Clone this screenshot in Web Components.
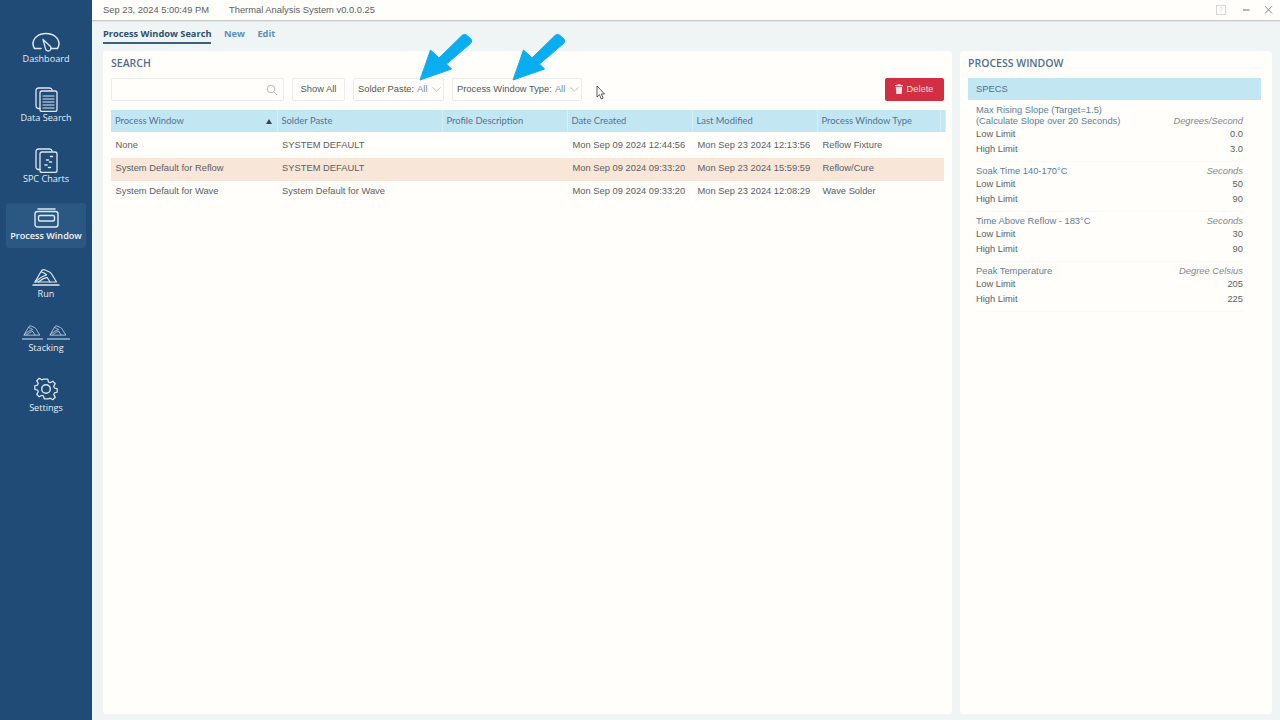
<!DOCTYPE html>
<html><head><meta charset="utf-8"><title>Thermal Analysis System</title>
<style>
html,body{margin:0;height:100%;overflow:hidden}
body{width:1280px;height:720px;font-family:"Liberation Sans",Arial,sans-serif;background:#eff5f4;position:relative}
app-shell{display:flex;width:1280px;height:720px}
</style></head><body>
<app-shell>
  <side-bar slot="side">
    <nav-item label="Dashboard" icon="dash" top="32" ih="21" gap="0"></nav-item>
    <nav-item label="Data Search" icon="data" top="22" ih="25" gap="0"></nav-item>
    <nav-item label="SPC Charts" icon="spc" top="24" ih="25" gap="0"></nav-item>
    <nav-item label="Process Window" icon="pw" top="18" ih="20" gap="2" active></nav-item>
    <nav-item label="Run" icon="run" top="19" ih="19" gap="2"></nav-item>
    <nav-item label="Stacking" icon="stack" top="23" ih="18" gap="1"></nav-item>
    <nav-item label="Settings" icon="gear" top="23" ih="24" gap="1"></nav-item>
  </side-bar>
  <main-area>
    <title-bar></title-bar>
    <tab-bar></tab-bar>
    <div style="display:flex;gap:8px;padding:1px 8px 6px 11px;flex:1;min-height:0">
      <search-panel></search-panel>
      <spec-panel>
        <spec-group name="Max Rising Slope (Target=1.5)&#10;(Calculate Slope over 20 Seconds)" unit="Degrees/Second" low="0.0" high="3.0"></spec-group>
        <spec-group name="Soak Time 140-170°C" unit="Seconds" low="50" high="90"></spec-group>
        <spec-group name="Time Above Reflow - 183°C" unit="Seconds" low="30" high="90"></spec-group>
        <spec-group name="Peak Temperature" unit="Degree Celsius" low="205" high="225"></spec-group>
      </spec-panel>
    </div>
  </main-area>
</app-shell>
<call-arrow style="left:418px;top:32px"></call-arrow>
<call-arrow style="left:511px;top:32px"></call-arrow>
<mouse-cursor style="left:596px;top:85px"></mouse-cursor>
<script>
function def(name, css, html, init){
  customElements.define(name, class extends HTMLElement{
    connectedCallback(){
      if(this.shadowRoot) return;
      const r=this.attachShadow({mode:'open'});
      const h=typeof html==='function'?html(this):html;
      r.innerHTML='<style>'+css+'</style>'+h;
      if(init) init(this,r);
    }
  });
}
def('app-shell',':host{display:flex;width:1280px;height:720px}','<slot name="side"></slot><slot></slot>');
def('side-bar',':host{display:flex;flex-direction:column;width:92px;height:720px;background:#1f4b76;box-sizing:border-box;align-items:center;flex:none;position:relative}','<slot></slot>');
const hull='<path d="M3 15 9 4.500c.8-1.500 2-2.300 3.500-1.800l5 2.300c2 .8 2.500 2.800 3.500 4.300l3.500 5.700z"/><path d="M3 15c4-3.800 7-5.600 11-7M6.500 15c3-2.800 5.500-4.200 8.500-4.700l3 4.700M9.500 5c2 .5 3.500 1.400 5 2.800"/>';
const I={
 dash:'<svg width="30" height="21" viewBox="0 0 30 21" fill="none" stroke="#dfe9f1" stroke-width="1.5" stroke-linecap="round" stroke-linejoin="round"><path d="M10 16.500H3.500C2.500 15 2 13.500 2 12 2 6 7.500 1.500 15 1.500S28 6 28 12c0 1.500-.5 3-1.500 4.500H20"/><path d="M12 7.500l7.500 7a2.800 2.800 0 1 1-5 2.200z" stroke-width="1.300"/></svg>',
 data:'<svg width="25" height="25" viewBox="0 0 25 25" fill="none" stroke="#dfe9f1" stroke-width="1.3" stroke-linecap="round" stroke-linejoin="round"><path d="M6 21.500H4.500a2.500 2.500 0 0 1-2.500-2.500V3.500A2.500 2.500 0 0 1 4.500 1h11A2.500 2.500 0 0 1 18 3"/><rect x="6" y="4" width="17" height="20.500" rx="2"/><path d="M9 9h11M9 12h11M9 15h11M9 18h11M9 21h11" stroke-width="1.200"/></svg>',
 spc:'<svg width="25" height="25" viewBox="0 0 25 25" fill="none" stroke="#dfe9f1" stroke-width="1.3" stroke-linecap="round" stroke-linejoin="round"><path d="M6 21.500H4.500a2.500 2.500 0 0 1-2.500-2.500V3.500A2.500 2.500 0 0 1 4.500 1h11A2.500 2.500 0 0 1 18 3"/><rect x="6" y="4" width="17" height="20.500" rx="2"/><path d="M16.500 8.500h2M12.500 12h2M15.500 14h2M11 17h2M14.500 19.500h2" stroke-width="1.500"/></svg>',
 pw:'<svg width="25" height="20" viewBox="0 0 25 20" fill="none" stroke="#dfe9f1" stroke-width="1.4" stroke-linecap="round" stroke-linejoin="round"><path d="M4 1h17"/><rect x="1" y="3.500" width="23" height="15.500" rx="2.500"/><rect x="4.500" y="7.500" width="16" height="5.500" rx="1.500"/></svg>',
 run:'<svg width="28" height="19" viewBox="0 0 28 19" fill="none" stroke="#dfe9f1" stroke-width="1.200" stroke-linecap="round" stroke-linejoin="round">'+hull+'<path d="M1 18h26" stroke-width="1.400"/></svg>',
 stack:'<svg width="48" height="18" viewBox="0 0 48 18" fill="none" stroke="#dfe9f1" stroke-width="1" stroke-linecap="round" stroke-linejoin="round"><g transform="translate(0 1) scale(.72)">'+hull+'</g><path d="M.5 16h20"/><g transform="translate(26 1) scale(.72)">'+hull+'</g><path d="M25.500 16h22"/></svg>',
 gear:'<svg width="24" height="24" viewBox="0 0 24 24" fill="none" stroke="#dfe9f1" stroke-width="1.400" stroke-linejoin="round"><circle cx="12" cy="12" r="4.300"/><path d="M10 1h4l.7 3.200 2 .8 2.800-1.700 2.800 2.800-1.700 2.800.8 2 3 .7v4l-3 .7-.8 2 1.700 2.800-2.800 2.800-2.800-1.700-2 .8L14 23h-4l-.7-3.200-2-.8-2.800 1.700-2.800-2.800 1.700-2.800-.8-2-3-.7v-4l3-.7.8-2-1.700-2.800 2.800-2.800 2.800 1.700 2-.8z" transform="translate(1.200 1.200) scale(.9)"/></svg>'
};
def('nav-item',`:host{display:flex;flex-direction:column;align-items:center;width:80px;flex:none;box-sizing:border-box;color:#e6eef5;font:9.100px/12px "Open Sans",sans-serif}
:host([active]){background:#2a5883;border-radius:3px;font-weight:600;padding:5px 0 6px;color:#f0f5f9}
.i{display:flex;justify-content:center;align-items:center}.t{white-space:nowrap}`,
 e=>`<div class="i" style="height:${e.getAttribute('ih')}px;margin-bottom:${e.getAttribute('gap')}px">${I[e.getAttribute('icon')]}</div><div class="t">${e.getAttribute('label')}</div>`,
 e=>{e.style.marginTop=e.getAttribute('top')+'px';});
def('main-area',':host{display:flex;flex-direction:column;flex:1;min-width:0;height:720px}','<slot></slot>');
def('title-bar',`:host{display:flex;align-items:center;height:20px;background:#fffefb;border-bottom:1px solid #c9cbc8;box-shadow:0 1px 1px #e2e6e4;padding:0 7px 0 11px;font:9.350px "Liberation Sans",sans-serif;color:#5c6064;flex:none}
.t{margin-left:20px}.s{flex:1}.w{display:flex;align-items:center;gap:12px}svg{display:block}`,
 `<span>Sep 23, 2024 5:00:49 PM</span><span class="t">Thermal Analysis System v0.0.0.25</span><span class="s"></span>
 <span class="w"><svg width="10" height="10" viewBox="0 0 10 10"><rect x=".5" y=".5" width="9" height="9" fill="none" stroke="#d5d8d6"/><path d="M3.800 3.500C4 2 6.300 2.200 6.200 3.700 6.100 4.600 5 4.600 5 5.800M5 6.800v1" stroke="#c5c8c7" fill="none" stroke-width=".7"/></svg><svg width="9" height="10" viewBox="0 0 9 10" style="margin-left:4px"><path d="M1 5h6.500" stroke="#767b7f" stroke-width="1.100"/></svg><svg width="9" height="10" viewBox="0 0 9 10" style="margin-left:1px"><path d="M1 1.200l7 7.200M8 1.200l-7 7.200" stroke="#767b7f" stroke-width=".9"/></svg></span>`);
def('tab-bar',`:host{display:flex;align-items:flex-start;height:29px;padding:7px 0 0 11px;gap:12.500px;font:700 9.250px/12px "Open Sans",sans-serif;flex:none;box-sizing:border-box;color:#5a8fbf}
.a{color:#2e4f70;border-bottom:2px solid #3b5f80;padding-bottom:2px;white-space:nowrap}`,
 `<span class="a">Process Window Search</span><span>New</span><span>Edit</span>`);
def('search-panel',`:host{display:flex;flex-direction:column;width:849px;background:#fffefb;border-radius:3px;box-sizing:border-box;padding:6px 8px;flex:none}
h2{margin:0;font:600 10.500px/13px "Open Sans",sans-serif;color:#4f6f90;height:21px;}
.bar{display:flex;align-items:center;height:23px;gap:8px;margin-bottom:9px}
.input{width:173px;height:23px;box-sizing:border-box;border:1px solid #ececea;border-radius:2px;display:flex;align-items:center;justify-content:flex-end;padding-right:5px}
.btn,.dd{height:23px;box-sizing:border-box;border:1px solid #ececea;border-radius:2px;font:9.350px "Liberation Sans",sans-serif;color:#53585d;display:flex;align-items:center;justify-content:flex-start;white-space:nowrap;padding-bottom:1px}
.btn{width:53px;justify-content:center}.dd{padding-left:4px}.dd b{font-weight:400;color:#6f8fb5;margin-left:3px}.dd svg{margin-left:4.500px}
.s{flex:1}.del{width:59px;height:23px;background:#d22f42;border-radius:2px;color:#f9dfe0;font:9.350px "Liberation Sans",sans-serif;display:flex;align-items:center;justify-content:center;gap:3px;padding-bottom:1px;box-sizing:border-box}`,
 `<h2>SEARCH</h2><div class="bar"><div class="input"><svg width="12" height="12" viewBox="0 0 12 12" fill="none" stroke="#b5b8b8" stroke-width="1"><circle cx="5" cy="5" r="3.800"/><path d="M8 8l3 3"/></svg></div>
 <div class="btn">Show All</div>
 <div class="dd" style="width:91px">Solder Paste:<b>All</b><svg width="9" height="5" viewBox="0 0 9 5" fill="none" stroke="#bcc0c4"><path d="M.5.500 4.500 4 8.500.5"/></svg></div>
 <div class="dd" style="width:130px">Process Window Type:<b>All</b><svg width="9" height="5" viewBox="0 0 9 5" fill="none" stroke="#bcc0c4"><path d="M.5.500 4.500 4 8.500.5"/></svg></div>
 <span class="s"></span>
 <div class="del"><svg width="8" height="10" viewBox="0 0 8 10" fill="#f9dfe0"><path d="M0 1h2.500V.2h3V1H8v1.200H0zM.8 3h6.400l-.5 7H1.300z"/></svg>Delete</div></div>
 <data-grid></data-grid>`);
def('data-grid',`:host{display:block;font:9.350px "Liberation Sans",sans-serif;color:#5c6064}
.g{display:grid;grid-template-columns:166.500px 165px 125px 125px 125px 123.500px 3px}
.h{background:#c3e6f3;height:22px;display:flex;align-items:center;padding:0 0 1px 4px;box-sizing:border-box;border-right:1px solid #d6eef7;font:9.400px "Lato",sans-serif;color:#557191;position:relative}
.h:last-child{border:0;padding:0}
.h i{position:absolute;right:5px;top:8.500px;width:0;height:0;border:3px solid transparent;border-top:0;border-bottom:5px solid #3c4650}
.c{height:23px;display:flex;align-items:center;padding:0 0 4px 4.500px;box-sizing:border-box;white-space:nowrap;overflow:hidden}
.c.d{padding-left:5px}.c.e{padding:0}
.sel{background:#f8e6d8}.sp{grid-column:1/-1;height:3px}`,
 ()=>{const rows=[['None','SYSTEM DEFAULT','','Mon Sep 09 2024 12:44:56','Mon Sep 23 2024 12:13:56','Reflow Fixture'],
 ['System Default for Reflow','SYSTEM DEFAULT','','Mon Sep 09 2024 09:33:20','Mon Sep 23 2024 15:59:59','Reflow/Cure'],
 ['System Default for Wave','System Default for Wave','','Mon Sep 09 2024 09:33:20','Mon Sep 23 2024 12:08:29','Wave Solder']];
 let o='<div class="g">'+['Process Window<i></i>','Solder Paste','Profile Description','Date Created','Last Modified','Process Window Type',''].map(t=>`<div class="h">${t}</div>`).join('')+'<div class="sp"></div>';
 rows.forEach((r,i)=>{o+=[...r,''].map((t,k)=>`<div class="c${i==1?' sel':''}${k==6?' e':k>2?' d':''}">${t}</div>`).join('')});
 return o+'</div>';});
def('spec-panel',`:host{display:block;width:312px;background:#fffefb;border-radius:3px;box-sizing:border-box;padding:6px 8px;flex:none}
h2{margin:0;font:600 10.500px/13px "Open Sans",sans-serif;color:#4f6f90;height:21px;}
.b{background:#c3e6f3;height:22px;width:293px;display:flex;align-items:center;padding:0 0 1px 8px;box-sizing:border-box;font:9.350px "Liberation Sans",sans-serif;color:#4f6f90;margin-bottom:5px}
.l{width:267px;padding-left:8px}`,
 `<h2>PROCESS WINDOW</h2><div class="b">SPECS</div><div class="l"><slot></slot></div>`);
def('spec-group',`:host{display:block;font:9.350px/14.500px "Liberation Sans",sans-serif;color:#5c6064;border-bottom:1px solid #f9faf8;padding-bottom:4.500px;margin-bottom:4px}
.r{display:flex;justify-content:space-between;align-items:flex-end}.n{color:#5d7d9c;line-height:10.500px;white-space:pre-line;padding-bottom:1px}.u{font-style:italic;color:#85888b;line-height:10.500px;padding-bottom:1px}`,
 e=>`<div class="r"><span class="n">${e.getAttribute('name')}</span><span class="u">${e.getAttribute('unit')}</span></div>
 <div class="r"><span>Low Limit</span><span>${e.getAttribute('low')}</span></div><div class="r"><span>High Limit</span><span>${e.getAttribute('high')}</span></div>`);
def('call-arrow',':host{position:absolute;display:block;width:56px;height:50px}svg{display:block}',
 `<svg width="56" height="50" viewBox="0 0 56 50" fill="#08aef0"><path d="M2 48 12.500 18 21 26 44 3.500c1.500-1.500 3.500-1.500 5 0l3.500 3c1.500 1.500 1.500 3.500 0 5L28.500 32l5 5z" stroke="#08aef0" stroke-linejoin="round"/></svg>`);
def('mouse-cursor',':host{position:absolute;display:block;width:10px;height:15px}svg{display:block}',
 `<svg width="10" height="15" viewBox="0 0 10 15"><path d="M1 1v11l2.500-2.300L5.200 14l2-.8-1.800-4.200h3.200z" fill="#fff" stroke="#333" stroke-width=".8" stroke-linejoin="round"/></svg>`);
</script>
</body></html>
